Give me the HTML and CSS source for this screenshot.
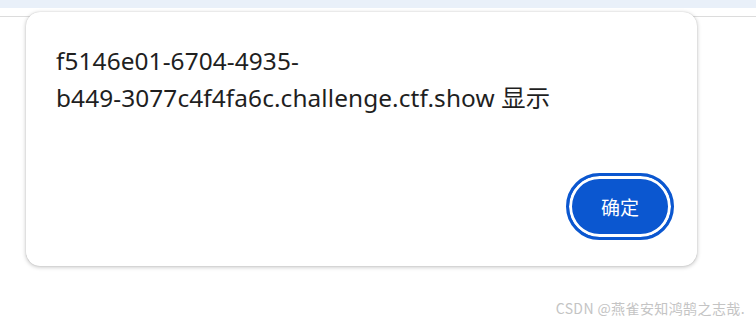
FILE: index.html
```html
<!DOCTYPE html>
<html lang="zh">
<head>
<meta charset="utf-8">
<link rel="stylesheet" href="styles.css">
</head>
<body>
<div class="topbar"></div>
<div class="rule"></div>
<div class="dialog">
  <p class="msg">f5146e01-6704-4935-<br>b449-3077c4f4fa6c.challenge.ctf.show 显示</p>
  <div class="actions">
    <button class="ok">确定</button>
  </div>
</div>
<div class="watermark">CSDN @燕雀安知鸿鹄之志哉.</div>
</body>
</html>
```
FILE: styles.css
```css
html, body {
  margin: 0;
  padding: 0;
  width: 756px;
  height: 324px;
  background: #ffffff;
  overflow: hidden;
  font-family: "Noto Sans", "Noto Sans CJK SC", sans-serif;
  position: relative;
}
.topbar {
  height: 8px;
  background: #e9f0f9;
}
.rule {
  margin-top: 8px;
  height: 1px;
  background: #dcdcdc;
}
.dialog {
  position: absolute;
  left: 26px;
  top: 12px;
  width: 671px;
  height: 254px;
  box-sizing: border-box;
  background: #fff;
  border-radius: 14px;
  box-shadow: 0 1px 4px rgba(0,0,0,0.25), 0 0 1px rgba(0,0,0,0.2);
  padding: 30px 30px 0 30px;
  display: flex;
  flex-direction: column;
}
.msg {
  margin: 0;
  font-size: 24.4px;
  line-height: 37px;
  color: #1f1f1f;
  letter-spacing: 0.1px;
}
.actions {
  margin-top: auto;
  margin-bottom: 26px;
  display: flex;
  justify-content: flex-end;
  margin-right: -7px;
}
.ok {
  width: 108px;
  height: 67px;
  border-radius: 34px;
  border: 3px solid #0b57d0;
  box-shadow: inset 0 0 0 3px #ffffff;
  background: #0b57d0;
  color: #fff;
  font-family: "Noto Sans CJK SC", sans-serif;
  font-size: 19px;
  padding: 0;
}
.watermark {
  position: absolute;
  right: 11px;
  top: 298px;
  font-size: 14px;
  letter-spacing: 0.4px;
  color: #c4c4c4;
  font-family: "Noto Sans CJK SC", sans-serif;
}
```
